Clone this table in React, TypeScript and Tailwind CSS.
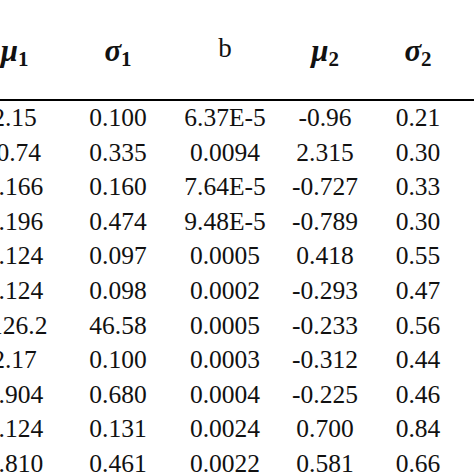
const COLS = [
  "w-[103px]",
  "w-[104px]",
  "w-[110px]",
  "w-[90px]",
  "w-[96px]",
];

const rows = [
  ["2.15", "0.100", "6.37E-5", "-0.96", "0.21"],
  ["-0.74", "0.335", "0.0094", "2.315", "0.30"],
  ["1.166", "0.160", "7.64E-5", "-0.727", "0.33"],
  ["1.196", "0.474", "9.48E-5", "-0.789", "0.30"],
  ["1.124", "0.097", "0.0005", "0.418", "0.55"],
  ["1.124", "0.098", "0.0002", "-0.293", "0.47"],
  ["-126.2", "46.58", "0.0005", "-0.233", "0.56"],
  ["2.17", "0.100", "0.0003", "-0.312", "0.44"],
  ["1.904", "0.680", "0.0004", "-0.225", "0.46"],
  ["1.124", "0.131", "0.0024", "0.700", "0.84"],
  ["1.810", "0.461", "0.0022", "0.581", "0.66"],
];

function Sym({ s, sub }: { s: string; sub: string }) {
  return (
    <span className="font-bold">
      <span className="italic text-[31px]">{s}</span>
      <span className="text-[21px] relative top-[5px]">{sub}</span>
    </span>
  );
}

export default function App() {
  const font = { fontFamily: '"Liberation Serif", "Times New Roman", serif' };
  return (
    <div className="w-[474px] h-[474px] bg-white overflow-hidden text-[#111]" style={font}>
      {/* header */}
      <div className="h-[101px] border-b-2 border-black">
        <div className="flex -ml-[37px] pt-[35px] text-[27px] leading-none">
          <div className={`${COLS[0]} shrink-0 text-center`}>
            <Sym s="μ" sub="1" />
          </div>
          <div className={`${COLS[1]} shrink-0 text-center`}>
            <Sym s="σ" sub="1" />
          </div>
          <div className={`${COLS[2]} shrink-0 text-center`}>b</div>
          <div className={`${COLS[3]} shrink-0 text-center`}>
            <Sym s="μ" sub="2" />
          </div>
          <div className={`${COLS[4]} shrink-0 text-center`}>
            <Sym s="σ" sub="2" />
          </div>
        </div>
      </div>

      {/* body */}
      <div className="-ml-[37px]">
        {rows.map((r, i) => (
          <div key={i} className="flex h-[34.6px] text-[25.5px] leading-[34.6px]">
            {r.map((v, j) => (
              <div key={j} className={`${COLS[j]} shrink-0 text-center whitespace-nowrap`}>
                {v}
              </div>
            ))}
          </div>
        ))}
      </div>
    </div>
  );
}
